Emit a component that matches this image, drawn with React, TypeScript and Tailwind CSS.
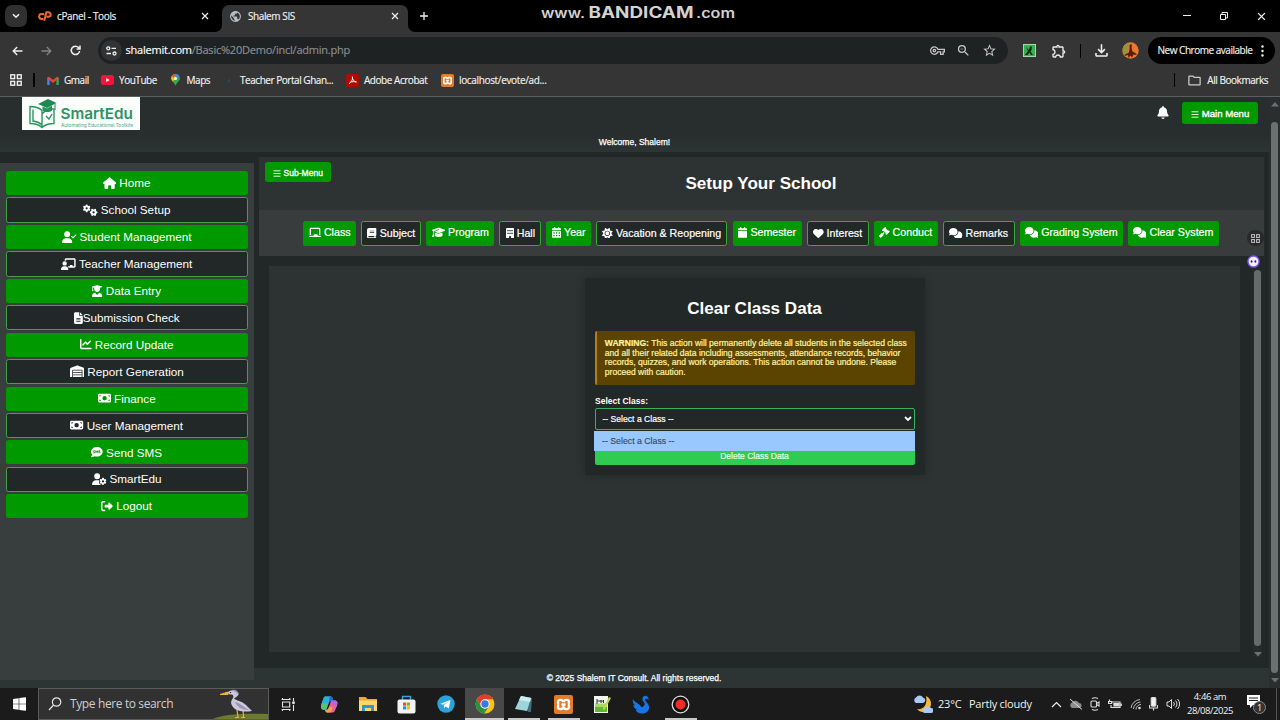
import type { ReactNode } from 'react';
import clsx from 'clsx';
import type { IconType } from 'react-icons';
import {
  FaBell,
  FaBook,
  FaBuilding,
  FaCalendar,
  FaCalendarDays,
  FaChalkboard,
  FaChalkboardUser,
  FaChartLine,
  FaCommentSms,
  FaComments,
  FaFileLines,
  FaGavel,
  FaGears,
  FaGraduationCap,
  FaHeart,
  FaHouse,
  FaMoneyBill,
  FaRightFromBracket,
  FaSun,
  FaUserCheck,
  FaUserGear,
  FaUserGraduate,
  FaWarehouse,
} from 'react-icons/fa6';
import {
  MdOutlineExtension,
  MdOutlineFileDownload,
  MdOutlineFolder,
  MdOutlineStarBorder,
  MdOutlineVpnKey,
  MdOutlineZoomOut,
  MdPublic,
} from 'react-icons/md';

// the glyphs are one em high, each with its own advance width
const W384 = 'w-[0.75em]';
const W448 = 'w-[0.875em]';
const W512 = 'w-[1em]';
const W576 = 'w-[1.125em]';
const W640 = 'w-[1.25em]';

type Entry = { label: string; icon: IconType; iconWidth: string; width?: string; tight?: boolean };

const sideItems: Entry[] = [
  { label: 'Home', icon: FaHouse, iconWidth: W576 },
  { label: 'School Setup', icon: FaGears, iconWidth: W640 },
  { label: 'Student Management', icon: FaUserCheck, iconWidth: W640 },
  { label: 'Teacher Management', icon: FaChalkboardUser, iconWidth: W640 },
  { label: 'Data Entry', icon: FaUserGraduate, iconWidth: W448 },
  { label: 'Submission Check', icon: FaFileLines, iconWidth: W384, tight: true },
  { label: 'Record Update', icon: FaChartLine, iconWidth: W512 },
  { label: 'Report Generation', icon: FaWarehouse, iconWidth: W640 },
  { label: 'Finance', icon: FaMoneyBill, iconWidth: W576 },
  { label: 'User Management', icon: FaMoneyBill, iconWidth: W576 },
  { label: 'Send SMS', icon: FaCommentSms, iconWidth: W512 },
  { label: 'SmartEdu', icon: FaUserGear, iconWidth: W640 },
  { label: 'Logout', icon: FaRightFromBracket, iconWidth: W512 },
];

const setupTabs: Entry[] = [
  { label: 'Class', icon: FaChalkboard, iconWidth: W576, width: 'w-[53px]' },
  { label: 'Subject', icon: FaBook, iconWidth: W448, width: 'w-[60px]' },
  { label: 'Program', icon: FaGraduationCap, iconWidth: W640, width: 'w-[68px]' },
  { label: 'Hall', icon: FaBuilding, iconWidth: W384, width: 'w-[42px]' },
  { label: 'Year', icon: FaCalendarDays, iconWidth: W448, width: 'w-[44.5px]' },
  { label: 'Vacation & Reopening', icon: FaSun, iconWidth: W512, width: 'w-[131.5px]' },
  { label: 'Semester', icon: FaCalendar, iconWidth: W448, width: 'w-[69px]' },
  { label: 'Interest', icon: FaHeart, iconWidth: W512, width: 'w-[62px]' },
  { label: 'Conduct', icon: FaGavel, iconWidth: W512, width: 'w-[64px]' },
  { label: 'Remarks', icon: FaComments, iconWidth: W640, width: 'w-[72px]' },
  { label: 'Grading System', icon: FaComments, iconWidth: W640, width: 'w-[103px]' },
  { label: 'Clear System', icon: FaComments, iconWidth: W640, width: 'w-[91px]' },
];

function GridGlyph({ size }: { size: number }) {
  return (
    <svg width={size} height={size} viewBox="0 0 12 12" fill="none" stroke="currentColor" strokeWidth="1.4">
      <rect x="0.8" y="0.8" width="3.8" height="3.8" />
      <rect x="7.4" y="0.8" width="3.8" height="3.8" />
      <rect x="0.8" y="7.4" width="3.8" height="3.8" />
      <rect x="7.4" y="7.4" width="3.8" height="3.8" />
    </svg>
  );
}

function Cross({ size = 8 }: { size?: number }) {
  return (
    <svg width={size} height={size} viewBox="0 0 8 8" stroke="currentColor" strokeWidth="1.2">
      <path d="M1 1l6 6M7 1L1 7" />
    </svg>
  );
}

function TabStrip() {
  return (
    <div className="flex h-8 bg-black text-[10px] [-webkit-text-stroke:0.15px]">
      <div className="flex w-[222px] items-center pl-[5px]">
        <div className="flex h-[22px] w-[22px] items-center justify-center rounded-[7px] bg-[#303030]">
          <svg width="8" height="6" viewBox="0 0 8 6" fill="none" stroke="currentColor" strokeWidth="1.6">
            <path d="M1 1.2l3 3 3-3" />
          </svg>
        </div>
        <svg className="ml-[11px]" width="14" height="10" viewBox="0 0 14 10" fill="none" stroke="#f4692b" strokeWidth="2">
          <path d="M6.2 3H3.6a2.400 2.400 0 0 0 0 4.900h1.600M6.200 9.800L8.400 1.200h2a2.200 2.200 0 0 1 0 4.500H8.600" />
        </svg>
        <span className="ml-[5px] w-[142px] tracking-[-0.35px]">cPanel - Tools</span>
        <div className="ml-[2px] flex">
          <Cross />
        </div>
      </div>
      <div className="relative mt-[5px] flex h-[27px] w-[186px] items-center rounded-t-[7px] bg-[#353535] pb-[5px] pl-[7px]">
        <svg className="absolute bottom-0 -left-[7px]" width="7" height="7" viewBox="0 0 7 7">
          <path d="M7 0v7H0A7 7 0 0 0 7 0" fill="#353535" />
        </svg>
        <svg className="absolute -right-[7px] bottom-0" width="7" height="7" viewBox="0 0 7 7">
          <path d="M0 0v7h7A7 7 0 0 1 0 0" fill="#353535" />
        </svg>
        <MdPublic className="h-[13px] w-[13px] text-[#b9bcbe]" />
        <span className="ml-[6px] w-[143px] tracking-[-0.4px]">Shalem SIS</span>
        <Cross />
      </div>
      <div className="flex w-[130px] items-center pl-[11px]">
        <svg width="10" height="10" viewBox="0 0 10 10" stroke="currentColor" strokeWidth="1.3">
          <path d="M5 1v8M1 5h8" />
        </svg>
      </div>
      <svg width="200" height="26" viewBox="0 0 200 26" fill="#d2d2d2" fontFamily="Inter, sans-serif">
        <text x="3" y="18" fontSize="13.5" fontWeight="600" textLength="44" lengthAdjust="spacingAndGlyphs">www.</text>
        <text x="50.5" y="18.3" fontSize="15.5" fontWeight="700" textLength="105" lengthAdjust="spacingAndGlyphs">BANDICAM</text>
        <text x="158" y="18" fontSize="13" fontWeight="600" textLength="39" lengthAdjust="spacingAndGlyphs">.com</text>
      </svg>
      <div className="ml-auto flex items-center gap-[29px] pr-[14px]">
        <svg width="8" height="8" viewBox="0 0 8 8" stroke="currentColor">
          <path d="M0 3.5h8" />
        </svg>
        <svg width="8" height="8" viewBox="0 0 8 8" fill="none" stroke="currentColor">
          <path d="M0.5 2.5h5v5h-5zM2 2V0.5h5.5V6H6" />
        </svg>
        <Cross size={9} />
      </div>
    </div>
  );
}

function Toolbar() {
  return (
    <div className="flex h-8 items-center bg-[#353535] pt-[5px] text-[11px]">
      <svg className="ml-[12px]" width="11" height="10" viewBox="0 0 11 10" fill="none" stroke="#eee" strokeWidth="1.4">
        <path d="M10.5 5H1.2M5.2 1L1.2 5l4 4" />
      </svg>
      <svg className="ml-[18px]" width="11" height="10" viewBox="0 0 11 10" fill="none" stroke="#858585" strokeWidth="1.3">
        <path d="M.5 5h9.3M5.8 1l4 4-4 4" />
      </svg>
      <svg className="ml-[17.5px]" width="11" height="11" viewBox="0 0 11 11" fill="none" stroke="#eee" strokeWidth="1.5">
        <path d="M9.6 6A4.2 4.2 0 1 1 8.6 2.6L10 4M10 .6V4H6.6" />
      </svg>
      <div className="ml-[17.5px] flex h-[27px] w-[910px] items-center rounded-full bg-[#1f2223] pl-[3px]">
        <div className="flex h-[21px] w-[21px] items-center justify-center rounded-full bg-[#313334]">
          <svg width="11" height="10" viewBox="0 0 11 10" fill="none" stroke="#eee" strokeWidth="1.3">
            <circle cx="2.3" cy="2.3" r="1.5" />
            <path d="M5.5 2.3H10M.5 7.5H5" />
            <circle cx="8.5" cy="7.5" r="1.5" />
          </svg>
        </div>
        <span className="ml-[3.5px] tracking-[-0.22px] text-white [-webkit-text-stroke:0.15px]">
          shalemit.com<span className="text-[#8d9091]">/Basic%20Demo/incl/admin.php</span>
        </span>
        <div className="ml-auto flex items-center gap-[11px] pr-[11px] text-[#c6c8c9]">
          <MdOutlineVpnKey className="h-[15px] w-[15px]" />
          <MdOutlineZoomOut className="h-[15px] w-[15px]" />
          <MdOutlineStarBorder className="h-[15px] w-[15px]" />
        </div>
      </div>
      <svg className="ml-[15px]" width="13" height="13" viewBox="0 0 13 13">
        <rect width="13" height="13" fill="#a4dba5" />
        <rect x="1" y="1" width="11" height="11" fill="#36b04e" />
        <path d="M3 3l3 3 1-3.500h2L8.500 6l-1 1.500L10 11H8L6.500 8.500 4.500 11H2l3-4z" fill="#122a16" />
      </svg>
      <MdOutlineExtension className="ml-[15px] h-[16px] w-[16px] text-[#eee]" />
      <div className="ml-[12.5px] h-[14px] w-[1.5px] bg-black" />
      <MdOutlineFileDownload className="ml-[11px] h-[19px] w-[19px] text-[#eee]" />
      <svg className="ml-[11px]" width="17" height="17" viewBox="0 0 17 17">
        <circle cx="8.5" cy="8.5" r="8.2" fill="#e9792c" />
        <path d="M.5 7a8 8 0 0 1 6-6l-.5 9-4 3z" fill="#8b9b3c" />
        <path d="M7.5 3.500l1-1.500 1.500 1-.5 3 1 3.500 3 1.500 1.500 2-3.500-.5-1.500 3-1.500-2-2 2.500-.5-3-3.500 1 1-2 3-1 1-3z" fill="#571c14" />
      </svg>
      <div className="ml-[9px] flex h-[27px] w-[127px] items-center justify-between rounded-full bg-black pr-[11px] pl-[9.5px] text-[10px] [-webkit-text-stroke:0.15px]">
        <span className="tracking-[-0.48px] whitespace-nowrap">New Chrome available</span>
        <svg width="3" height="12" viewBox="0 0 3 12" fill="currentColor">
          <circle cx="1.5" cy="1.5" r="1.2" />
          <circle cx="1.5" cy="6" r="1.2" />
          <circle cx="1.5" cy="10.5" r="1.2" />
        </svg>
      </div>
    </div>
  );
}

function Bookmark({ icon, width, children }: { icon: ReactNode; width: string; children: ReactNode }) {
  return (
    <div className={clsx('flex shrink-0 items-center gap-[5px] whitespace-nowrap', width)}>
      <span className="flex w-[13px] shrink-0 justify-center">{icon}</span>
      <span>{children}</span>
    </div>
  );
}

function BookmarksBar() {
  return (
    <div className="flex h-[33px] items-center border-b border-[#5c5f5f] bg-[#353535] text-[10px] tracking-[-0.46px] [-webkit-text-stroke:0.15px]">
      <div className="flex w-[46px] items-center pl-[10px]">
        <GridGlyph size={12} />
        <div className="ml-[11px] h-[14px] w-[1.5px] shrink-0 bg-black" />
      </div>
      <Bookmark
        width="w-[55px]"
        icon={
          <svg width="12" height="9" viewBox="0 0 12 9" fill="none" strokeWidth="2.4">
            <path d="M1.4 9V1.5" stroke="#4285f4" />
            <path d="M10.6 9V1.5" stroke="#34a853" />
            <path d="M1 1.4l5 4 5-4" stroke="#ea4335" />
          </svg>
        }
      >
        Gmail
      </Bookmark>
      <Bookmark
        width="w-[67.5px]"
        icon={
          <svg width="13" height="10" viewBox="0 0 13 10">
            <rect width="13" height="10" rx="2.5" fill="#f5133a" />
            <path d="M5.2 3v4l3.4-2z" fill="#fff" />
          </svg>
        }
      >
        YouTube
      </Bookmark>
      <Bookmark
        width="w-[53.5px]"
        icon={
          <svg width="9" height="12" viewBox="0 0 9 12">
            <path d="M4.5 0A4.4 4.4 0 0 0 .1 4.5C.1 7 3.6 8.5 4.5 12 5.4 8.5 8.9 7 8.9 4.5A4.4 4.4 0 0 0 4.5 0" fill="#34a853" />
            <path d="M.8 2A4.4 4.4 0 0 1 3.2.2L6 3 1.8 7.5C.2 5.7-.3 4 .8 2" fill="#fbbc04" />
            <path d="M.8 2A4.4 4.4 0 0 1 4.5 0L3 4z" fill="#ea4335" />
            <path d="M4.5 0a4.4 4.4 0 0 1 3.9 2.3L5 4 3.5.2z" fill="#4285f4" />
            <circle cx="4.5" cy="4.4" r="1.5" fill="#fff" />
          </svg>
        }
      >
        Maps
      </Bookmark>
      <Bookmark
        width="w-[124px]"
        icon={
          <svg width="6" height="6" viewBox="0 0 6 6">
            <path d="M1 5l3-4v4z" fill="#254a62" />
          </svg>
        }
      >
        Teacher Portal Ghan...
      </Bookmark>
      <Bookmark
        width="w-[95px]"
        icon={
          <svg width="13" height="13" viewBox="0 0 13 13">
            <rect width="13" height="13" rx="2" fill="#b30b00" />
            <path d="M6.3 2.5c.6 2 .2 4.500-3.300 7.300M6.300 3c.2 3 1.700 4.600 4.200 5M4.200 8.300c2-.8 3.800-.9 6.200-.3" fill="none" stroke="#fff" strokeWidth="1" />
          </svg>
        }
      >
        Adobe Acrobat
      </Bookmark>
      <Bookmark width="w-[120px]" icon={<Xampp size={13} />}>
        <span className="tracking-[-0.34px]">localhost/evote/ad...</span>
      </Bookmark>
      <div className="ml-auto h-[14px] w-[1.5px] bg-black" />
      <MdOutlineFolder className="mr-[5px] ml-[12px] h-[15px] w-[15px] text-[#ccc]" />
      <span className="mr-[12px]">All Bookmarks</span>
    </div>
  );
}

function Xampp({ size }: { size: number }) {
  return (
    <span className="flex items-center justify-center rounded-[2px] bg-[#e57a28] text-white">
      <svg width={size} height={size} viewBox="0 0 19 19" fill="none" stroke="currentColor" strokeWidth="2.4">
        <path d="M9.5 7C8.500 4.300 4 4 4 7c0 1.500.6 2.500 1.200 2.500C4.600 9.500 4 10.500 4 12c0 3 4.500 2.700 5.500 0C10.500 14.700 15 15 15 12c0-1.500-.6-2.500-1.200-2.500.6 0 1.200-1 1.200-2.500 0-3-4.500-2.700-5.500 0M7.500 9.500h4" />
      </svg>
    </span>
  );
}

function Logo() {
  return (
    <svg width="118" height="33" viewBox="0 0 118 33" className="ml-[22px] bg-[#fbfdfb]">
      <g fill="none" stroke="#2b9460" strokeWidth="1.4">
        <path d="M20 13.5c-3-3-7-4-12-4v17c5 0 9 1 12 4 3-3 7-4 12-4v-15M20 13.5v17M11 12.500v11.500c3 .3 6 1 9 3.700M32 12c-6-.5-9.500 2-12 5" />
        <path d="M24 19l3 3 3-5" />
      </g>
      <path d="M16 7l10-5 8.500 4-9.500 5z" fill="#1c8a52" />
      <path d="M20.5 9.5v4c3 2 7 2 9.500 0v-5l-5 3z" fill="#23915b" />
      <path d="M33 7v6" stroke="#1c8a52" />
      <text x="38.5" y="22" fontFamily="Inter, sans-serif" fontSize="15" fontWeight="600" fill="#2b9460" textLength="72.5" lengthAdjust="spacingAndGlyphs">
        SmartEdu
      </text>
      <text x="39" y="29.5" fontFamily="Inter, sans-serif" fontSize="5" fill="#5aa583" textLength="72" lengthAdjust="spacingAndGlyphs">
        Automating Educational Toolkits
      </text>
    </svg>
  );
}

function SideButton({ item, outlined }: { item: Entry; outlined: boolean }) {
  const Icon = item.icon;
  return (
    <button
      className={clsx(
        'flex w-full shrink-0 items-center justify-center rounded-[2.5px] text-[11.73px] leading-none',
        outlined ? 'h-[25.5px] border border-[#43a047] bg-[#222727]' : 'h-[24px] bg-[#009900]',
        item.tight ? 'gap-0' : 'gap-[3px]',
      )}
    >
      <Icon className={clsx('h-[1.05em] shrink-0', item.iconWidth)} />
      {item.label}
    </button>
  );
}

function SetupTab({ item, outlined }: { item: Entry; outlined: boolean }) {
  const Icon = item.icon;
  return (
    <button
      className={clsx(
        'flex h-[25px] shrink-0 items-center justify-center gap-[3px] rounded-[2.5px] text-[10.67px] leading-none whitespace-nowrap [-webkit-text-stroke:0.2px]',
        outlined ? 'border border-[#2fb02f] bg-[#222727]' : 'bg-[#009900] pb-[1px]',
        item.width,
      )}
    >
      <Icon className={clsx('h-[1em] shrink-0', item.iconWidth)} />
      {item.label}
    </button>
  );
}

function Arrow({ up }: { up?: boolean }) {
  return (
    <svg width="8" height="5" viewBox="0 0 8 5" fill="#6b7170" className="shrink-0">
      <path d={up ? 'M4 0l4 4.5H0z' : 'M4 4.5L8 0H0z'} />
    </svg>
  );
}

function ClearClassCard() {
  return (
    <div className="h-[197px] w-[340px] bg-[#222727] px-[10px] pt-[20px] shadow-[0_0_8px_rgba(0,0,0,0.25)]">
      <h2 className="text-center text-[17.07px] leading-[22px] font-bold">Clear Class Data</h2>
      <div className="mt-[11px] h-[54px] rounded-[2px] border-l-[2.5px] border-[#b57d12] bg-[#5b4401] pt-[8px] pl-[8.3px] text-[8.56px] leading-[9.6px] whitespace-nowrap text-[#fff2a3] [-webkit-text-stroke:0.2px]">
        <strong>WARNING:</strong> This action will permanently delete all students in the selected class
        <br />
        and all their related data including assessments, attendance records, behavior
        <br />
        records, quizzes, and work operations. This action cannot be undone. Please
        <br />
        proceed with caution.
      </div>
      <div className="mt-[11px] pl-[0.5px] text-[8.53px] leading-[11px] font-bold">Select Class:</div>
      <div className="relative mt-[1px] flex h-[22px] items-center justify-between rounded-[2px] border border-[#35b25c] pr-[2px] pl-[7px] text-[8.6px] [-webkit-text-stroke:0.2px]">
        <span>-- Select a Class --</span>
        <svg width="8" height="6" viewBox="0 0 8 6" fill="none" stroke="#fff" strokeWidth="1.8">
          <path d="M1 1l3 3 3-3" />
        </svg>
        <div className="absolute top-[22px] -left-[1.5px] flex h-[20px] w-[321px] items-center bg-[#99c8ff] pt-[2px] pl-[8px] text-[8.75px] text-[#33465e] [-webkit-text-stroke:0.1px]">
          -- Select a Class --
        </div>
      </div>
      <button className="mt-[15px] flex h-[20px] w-full items-center justify-center rounded-[2px] bg-[#2fcb52] pt-[2px] text-[8.53px] leading-none text-[#e4ffe9] [-webkit-text-stroke:0.2px]">
        Delete Class Data
      </button>
    </div>
  );
}

function SchoolPage() {
  return (
    <div className="flex h-[591px] bg-[#222828] font-['Liberation_Sans',Arial,sans-serif] text-white">
      <div className="flex w-[1269px] flex-col">
        <header className="h-[55px] shrink-0 bg-linear-to-b from-[#282d2d] from-70% to-[#2d3434]">
          <div className="flex h-[33px] items-start">
            <Logo />
            <FaBell className="mt-[9px] ml-auto h-[13px] w-[12px]" />
            <button className="mt-[5px] mr-[11px] ml-[13px] flex h-[22px] w-[76px] items-center justify-center gap-[3px] rounded-[2.5px] bg-[#009900] pt-[2px] text-[9.6px] [-webkit-text-stroke:0.35px]">
              <Burger />
              Main Menu
            </button>
          </div>
          <div className="mt-[6px] text-center text-[8.53px] leading-[12px] [-webkit-text-stroke:0.25px]">Welcome, Shalem!</div>
        </header>
        <div className="flex h-[516px]">
          <aside className="mt-[11px] flex h-[517px] w-[254px] shrink-0 flex-col gap-[2.2px] bg-[#383d3d] pt-[8px] pr-[6px] pl-[5.5px]">
            {sideItems.map((item, i) => (
              <SideButton key={item.label} item={item} outlined={i % 2 === 1} />
            ))}
          </aside>
          <main className="relative mt-[5px] ml-[5px] w-[1005px]">
            <div className="flex h-[53px] bg-[#2d3333] px-[6px] pt-[5px]">
              <button className="flex h-[20px] w-[66px] shrink-0 items-center justify-center gap-[2.5px] rounded-[2.5px] bg-[#009900] pt-[2px] text-[8.53px] [-webkit-text-stroke:0.3px]">
                <Burger />
                Sub-Menu
              </button>
              <h1 className="mt-[11px] mr-[67px] flex-1 text-center text-[17.07px] leading-[22px] font-bold">Setup Your School</h1>
            </div>
            <div className="flex h-[46px] justify-center gap-[5.06px] bg-[#383c3c] pt-[10.5px] pr-[1px]">
              {setupTabs.map((item, i) => (
                <SetupTab key={item.label} item={item} outlined={i % 2 === 1 && i < 11} />
              ))}
            </div>
            <div className="mt-[10px] flex">
              <div className="ml-[10px] flex h-[386px] w-[971px] justify-center bg-[#2d3333] pt-[12px]">
                <ClearClassCard />
              </div>
              <div className="mt-[4px] ml-[13px] flex w-[9px] flex-col items-center gap-[6px] bg-[#262b2b]">
                <div className="h-[376px] w-[7px] rounded-full bg-[#646b6a]" />
                <Arrow />
              </div>
            </div>
            {/* floating assistant */}
            <div className="absolute top-[73px] right-0 flex h-[16px] w-[17px] items-center justify-center rounded-full bg-[#262a2a] text-[#bbb]">
              <GridGlyph size={9} />
            </div>
            <svg className="absolute top-[98px] right-[4px]" width="13" height="13" viewBox="0 0 13 13">
              <circle cx="6.5" cy="6.5" r="6.3" fill="#7a57e8" />
              <circle cx="6.5" cy="6.5" r="4.8" fill="#f2efff" />
              <ellipse cx="4.6" cy="6.5" rx="0.9" ry="1.3" fill="#28204a" />
              <ellipse cx="8.4" cy="6.5" rx="0.9" ry="1.3" fill="#28204a" />
            </svg>
          </main>
        </div>
        <footer className="flex h-[20px] bg-[#2d3434]">
          <div className="h-[12px] w-[254px] bg-[#383d3d]" />
          <div className="mr-[255px] flex-1 text-center text-[8.53px] leading-[21px] [-webkit-text-stroke:0.25px]">
            © 2025 Shalem IT Consult. All rights reserved.
          </div>
        </footer>
      </div>
      <div className="flex w-[11px] flex-col items-center bg-[#2a2e2e] pt-[5px]">
        <Arrow up />
        <div className="mt-[15px] mb-[5px] h-[551px] w-[7px] shrink-0 rounded-full bg-[#6a7170]" />
        <Arrow />
      </div>
    </div>
  );
}

function Burger() {
  return (
    <svg width="8" height="7" viewBox="0 0 8 7" stroke="currentColor" strokeWidth="0.9">
      <path d="M.5 .8h7M.5 3.5h7M.5 6.2h7" />
    </svg>
  );
}

function TaskIcon({ width, active, open, children }: { width: string; active?: boolean; open?: boolean; children: ReactNode }) {
  return (
    <div className={clsx('flex h-8 shrink-0 flex-col items-center justify-between pt-[6px]', width, active && 'bg-[#484848]')}>
      <div className="flex h-5 items-center">{children}</div>
      {open && <div className={clsx('h-[2px] bg-[#c9c9c9]', active ? 'w-full' : 'w-[32px]')} />}
    </div>
  );
}

function Taskbar() {
  return (
    <div className="flex h-8 items-center bg-[#1b1b1b]">
      <div className="flex w-[38px] justify-center">
        <svg width="13" height="14" viewBox="0 0 13 14" fill="#fff">
          <path d="M0 2l5.700-.8v5.500H0zM6.300 1.100L13 .2v6.500H6.300zM0 7.300h5.700v5.500L0 12zM6.300 7.300H13v6.500l-6.700-.9z" />
        </svg>
      </div>
      <div className="flex h-8 w-[231px] items-center border border-[#5b5b5b] bg-[#313131] text-[#cfcfcf]">
        <svg className="ml-[9px]" width="14" height="14" viewBox="0 0 14 14" fill="none" stroke="#e4e4e4" strokeWidth="1.2">
          <circle cx="8.6" cy="5" r="4.2" />
          <path d="M5.6 8L1 13" />
        </svg>
        <span className="ml-[8px] text-[12px] tracking-[-0.38px] whitespace-nowrap">Type here to search</span>
        <svg className="ml-auto self-end" width="57" height="30" viewBox="0 0 57 30">
          <path d="M2 30c9-5 32-6 55-5v5z" fill="#6b7a2c" />
          <path d="M26 21l1 7M32 21l.5 7M24 28.500h4M30 28.500h4" stroke="#e8b52d" strokeWidth="1.2" fill="none" />
          <path d="M17 3L9 5.500l8 0z" fill="#f0b429" stroke="#f0b429" />
          <path d="M17 3.500c1-3 8-3.500 10 .5 1 3-2 4-4 5.500 2 2 8 2.500 12 6.500l6 6c-7 1-15 1-19-4-3-4-2-6 0-9 1-1.500 0-3-1-3.500-2 .3-4-.5-4-2" fill="#ccc7dc" />
          <path d="M21 1c3-1 7 1 7 5l-3-2.500M24 13c5 1 9 5 14 8-7 0-12-3-14-8" fill="#9b95b5" />
          <circle cx="19.5" cy="3.6" r="0.7" fill="#222" />
        </svg>
      </div>
      <TaskIcon width="w-[38px]">
        <svg width="14" height="13" viewBox="0 0 14 13" fill="none" stroke="#e6e6e6" strokeWidth="1.1">
          <path d="M.6 1.500h9M.6 11.500h9M1.500 0v1.500M8.700 0v1.500M1.500 11.500V13M8.700 11.500V13M1.500 4h7.200v5H1.500zM12.500 0v3M12.500 7v6" />
          <circle cx="12.5" cy="4.8" r="0.9" fill="#e6e6e6" />
        </svg>
      </TaskIcon>
      <TaskIcon width="w-[43px]">
        <svg width="18" height="17" viewBox="0 0 18 17">
          <path d="M5.5.5h5.500c1 0 1.500 1 2 3l.5 1.500H11c-1.500 0-2 1-2.500 2.500L7 12c-.5 1.500-1 2-2.500 2C1 14 .5 11 1.500 8L3.500 2.500C4 1 4.500.5 5.500.5" fill="#2aa3e0" />
          <path d="M3.5 2.500L1.500 8c-1 3-.5 6 3 6 1 0 1.800-.5 2.200-1.500L8.500 7H3z" fill="#5cc07a" />
          <path d="M3.5 2.500C4 1 4.500.5 5.500.5H11L9 5l-.5 2.500L2 7z" fill="#2bb0dc" />
          <path d="M12.5 16.500H7c-1 0-1.500-1-2-2.500H6c1.500 0 2.300-1 2.800-2.500L10.500 6.500C11 5 11.500 4.500 13 4.500h1.500c3 0 3.500 2.500 2.500 5L15 14.500c-.5 1.500-1.500 2-2.500 2" fill="#ee5f96" />
          <path d="M5 14h1c1.500 0 2.300-1 2.800-2.500l.5-1 3.200 1-1.500 5H7c-1 0-1.500-1-2-2.500" fill="#f7a04b" />
          <path d="M13 4.500h1.500c3 0 3.500 2.500 2.500 5l-.5 1.500-5.800-5C11.200 5 11.500 4.500 13 4.500" fill="#b566dd" />
          <path d="M11 .5c1 0 1.500 1 2 3l.3 1h-2C10 4.500 9.500 5 9 6.500l.5-4C9.700 1 10 .5 11 .5" fill="#2f5fd8" />
        </svg>
      </TaskIcon>
      <TaskIcon width="w-[36px]">
        <svg width="18" height="16" viewBox="0 0 18 16">
          <path d="M0 1h6.500l2 2H18v12H0z" fill="#e9a93a" />
          <path d="M0 4.500h18V15H0z" fill="#ffd869" />
          <path d="M3 15V9h12v6h-3v-3H6v3z" fill="#3f8fd6" />
        </svg>
      </TaskIcon>
      <TaskIcon width="w-[41px]">
        <svg width="19" height="19" viewBox="0 0 19 19">
          <path d="M5.5 5V1.500h8V5" fill="none" stroke="#35a5e0" strokeWidth="1.4" />
          <rect x="0.5" y="4.5" width="18" height="14" rx="2" fill="#f1f3f5" />
          <path d="M6 7.500h3.200v3.200H6z" fill="#f25022" />
          <path d="M9.800 7.500H13v3.200H9.800z" fill="#7fba00" />
          <path d="M6 11.300h3.200v3.200H6z" fill="#00a4ef" />
          <path d="M9.800 11.300H13v3.200H9.800z" fill="#ffb900" />
        </svg>
      </TaskIcon>
      <TaskIcon width="w-[38px]">
        <svg width="18" height="18" viewBox="0 0 18 18">
          <circle cx="9" cy="9" r="8.7" fill="#2ba3da" />
          <path d="M3.5 8.800L13.500 5l-1.700 8.500-3-2-1.700 1.600-.3-3 4.400-3.400-5.500 3z" fill="#fff" />
        </svg>
      </TaskIcon>
      <TaskIcon width="w-[39px]" active open>
        <svg width="20" height="20" viewBox="0 0 20 20">
          <circle cx="10" cy="10" r="9.5" fill="#fbc116" />
          <path d="M1.8 5.200A9.500 9.500 0 0 1 18.200 5.250H10L6 12.500z" fill="#e33b2e" />
          <path d="M1.8 5.200L6 12.500l4 2.200L9.500 19.500A9.500 9.500 0 0 1 1.800 5.200" fill="#229342" />
          <path d="M10 14.500l-.8 5L13.500 13z" fill="#229342" />
          <circle cx="10" cy="10" r="4.7" fill="#fff" />
          <circle cx="10" cy="10" r="3.7" fill="#3b78e7" />
        </svg>
      </TaskIcon>
      <TaskIcon width="w-[40px]" open>
        <svg width="18" height="18" viewBox="0 0 18 18">
          <path d="M6 1l11 2-1 14-3 0z" fill="#3e6c78" />
          <path d="M6 1l10 2-4 13L0 14z" fill="#9fd3dc" />
          <path d="M6 1l10 2-1 4L4 5z" fill="#cdeef1" />
        </svg>
      </TaskIcon>
      <TaskIcon width="w-[39px]" open>
        <Xampp size={19} />
      </TaskIcon>
      <TaskIcon width="w-[38px]">
        <svg width="18" height="19" viewBox="0 0 18 19">
          <path d="M1 1h14v17H1z" fill="#f4f7ef" />
          <path d="M2 10h12v7H2z" fill="#5fb92c" />
          <path d="M2 8.500h12V12H2z" fill="#a8d86c" />
          <path d="M4 4v5M4 6h7M8 5v3M10.500 5v3" stroke="#333" fill="none" />
          <path d="M16 2l2 1-6 11-2 1 0-2z" fill="#c3d63b" />
        </svg>
      </TaskIcon>
      <TaskIcon width="w-[40px]">
        <svg width="18" height="19" viewBox="0 0 18 19">
          <path d="M10 12.500c1.500-1.500 3.500-3 2.500-4.500C11 6.500 10 5 10.500 3 11.500.5 15 0 16 2.500l1 2-2.500-.8c-1.500-.3-2 1-1 2.300 2 2.500 4 4 3.500 7.500-.5 3-3.500 5-7 5-3.500 0-5.500-1.500-6.500-3.800l2 .2C2.500 13.500 1.500 12 1.200 10l2 .8C1.200 9 .5 6.500.8 4c2 3.500 6.500 4.500 9.200 8.500" fill="#1675e8" />
        </svg>
      </TaskIcon>
      <TaskIcon width="w-[39px]" open>
        <svg width="19" height="19" viewBox="0 0 19 19">
          <circle cx="9.5" cy="9.5" r="8.3" fill="#111" stroke="#ddd" strokeWidth="1.3" />
          <circle cx="9.5" cy="9.5" r="5" fill="#f12b24" />
        </svg>
      </TaskIcon>

      <div className="ml-auto flex items-center text-[11px]">
        <svg width="20" height="19" viewBox="0 0 20 19">
          <path d="M13 1c7 3 7 14-2 16-3 .5-5-1-7-3 6 1 11-4 9-13" fill="#f9b73e" />
          <path d="M3 8a3 3 0 0 1 0-5.500 4 4 0 0 1 7 0A2.800 2.800 0 0 1 10 8z" fill="#a9c9f6" />
          <path d="M12 18a2.500 2.500 0 0 1 0-5 3.500 3.500 0 0 1 6 0 2.500 2.500 0 0 1 0 5z" fill="#a9c9f6" />
        </svg>
        <span className="ml-[5px] w-[31px] tracking-[-0.2px]">23°C</span>
        <span className="w-[82px] tracking-[-0.25px] whitespace-nowrap">Partly cloudy</span>
        <svg width="11" height="7" viewBox="0 0 11 7" fill="none" stroke="#eee" strokeWidth="1.2">
          <path d="M1 6l4.500-4.500L10 6" />
        </svg>
        <svg className="ml-[7px]" width="14" height="12" viewBox="0 0 14 12">
          <path d="M3 10a3 3 0 0 1 0-5.500 4 4 0 0 1 7 .5 2.600 2.600 0 0 1 1 5z" fill="#8b8b8b" />
          <path d="M1 1l12 10.500" stroke="#ddd" />
        </svg>
        <svg className="ml-[7px]" width="10" height="14" viewBox="0 0 10 14" fill="none" stroke="#ddd" strokeWidth="1.1">
          <rect x="1" y="4" width="5.5" height="6" rx="1" />
          <path d="M6.5 6.500l2.500-1.500v4L6.500 7.500M2 1.500c2-1 4-1 6 0M2 12.500c2 1 4 1 6 0" />
        </svg>
        <svg className="ml-[8px]" width="14" height="10" viewBox="0 0 14 10" fill="none" stroke="#ddd" strokeWidth="1.2">
          <path d="M4 3h8v5.500H3V6M13.300 4.500v2.500M1.500.5v2M.6 2.500h3v2h-3z" />
          <path d="M6 4.500h5V7H6z" fill="#ddd" />
        </svg>
        <svg className="ml-[8px]" width="12" height="12" viewBox="0 0 12 12" fill="none" stroke="#bbb" strokeWidth="1">
          <path d="M1 10A10 10 0 0 1 10 1.500M3.500 11A7.500 7.500 0 0 1 10.500 4M6 11.500A5 5 0 0 1 11 6.500" />
          <circle cx="9.5" cy="10" r="1.3" fill="#ddd" stroke="none" />
        </svg>
        <svg className="ml-[7px]" width="9" height="14" viewBox="0 0 9 14" fill="none" stroke="#ddd" strokeWidth="1.1">
          <rect x="2.2" y="0.6" width="4.6" height="8.5" rx="1" fill="#f3f3f3" />
          <path d="M.6 8v3h7.800V8M4.500 11v2.500" />
        </svg>
        <svg className="ml-[8px]" width="15" height="12" viewBox="0 0 15 12" fill="none" stroke="#ddd" strokeWidth="1">
          <path d="M1 4h2l2.500-2.500v9L3 8H1zM7.500 4a3 3 0 0 1 0 4M9.500 2.500a5 5 0 0 1 0 7M11.500 1a7 7 0 0 1 0 10" />
        </svg>
        <div className="ml-[3px] flex w-[52px] flex-col items-center text-[9.5px] leading-[14px] tracking-[-0.42px]">
          <span>4:46 am</span>
          <span>28/08/2025</span>
        </div>
        <svg className="ml-[10px]" width="21" height="21" viewBox="0 0 21 21">
          <path d="M1 1h13v10H7l-3 3v-3H1z" fill="#fff" />
          <path d="M3 4h9M3 6.500h9" stroke="#222" />
          <circle cx="13.5" cy="13.5" r="6" fill="#333" stroke="#888" />
          <text x="13.5" y="17" fontSize="9" textAnchor="middle" fill="#fff">
            1
          </text>
        </svg>
        <div className="ml-[9px] h-8 w-px bg-[#555]" />
        <div className="w-[3px]" />
      </div>
    </div>
  );
}

export default function App() {
  return (
    <div className="h-[720px] w-[1280px] overflow-hidden bg-black font-['Open_Sans','Noto_Sans',sans-serif] text-[#f1f1f1]">
      <TabStrip />
      <Toolbar />
      <BookmarksBar />
      <SchoolPage />
      <Taskbar />
    </div>
  );
}
